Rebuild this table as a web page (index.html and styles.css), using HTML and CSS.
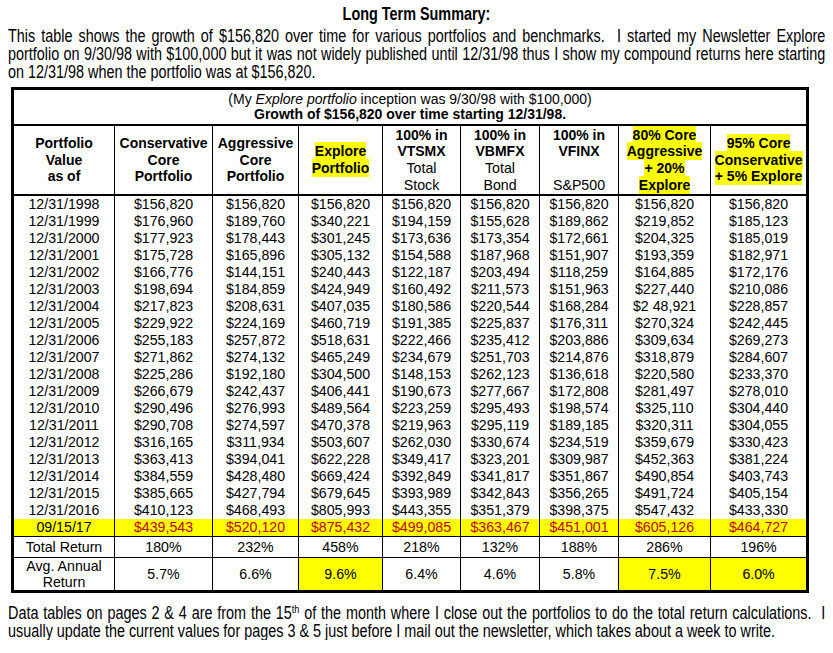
FILE: index.html
```html
<!DOCTYPE html>
<html>
<head>
<meta charset="utf-8">
<link rel="stylesheet" href="styles.css">
</head>
<body>
<h1 class="title">Long Term Summary:</h1>
<div class="narrow intro-wrap">
<p class="narrow-text">This table shows the growth of $156,820 over time for various portfolios and benchmarks.&nbsp; I started my Newsletter Explore portfolio on 9/30/98 with $100,000 but it was not widely published until 12/31/98 thus I show my compound returns here starting on 12/31/98 when the portfolio was at $156,820.</p>
</div>
<table class="summary">
<colgroup>
<col class="c1"><col class="c2"><col class="c3"><col class="c4"><col class="c5"><col class="c6"><col class="c7"><col class="c8"><col class="c9">
</colgroup>
<thead>
<tr class="caption-row"><th colspan="9">(My <i>Explore portfolio</i> inception was 9/30/98 with $100,000)<br><b>Growth of $156,820 over time starting 12/31/98.</b></th></tr>
<tr class="head-row">
<th>Portfolio<br>Value<br>as of</th>
<th>Conservative<br>Core<br>Portfolio</th>
<th>Aggressive<br>Core<br>Portfolio</th>
<th><span class="hl">Explore</span><br><span class="hl">Portfolio</span></th>
<th>100% in<br>VTSMX<br><span class="sub">Total<br>Stock</span></th>
<th>100% in<br>VBMFX<br><span class="sub">Total<br>Bond</span></th>
<th>100% in<br>VFINX<br><br><span class="sub">S&amp;P500</span></th>
<th><span class="hl">80% Core</span><br><span class="hl">Aggressive</span><br><span class="hl">+ 20%</span><br><span class="hl">Explore</span></th>
<th><span class="hl">95% Core</span><br><span class="hl">Conservative</span><br><span class="hl">+ 5% Explore</span></th>
</tr>
</thead>
<tbody>
<tr><td>12/31/1998</td><td>$156,820</td><td>$156,820</td><td>$156,820</td><td>$156,820</td><td>$156,820</td><td>$156,820</td><td>$156,820</td><td>$156,820</td></tr>
<tr><td>12/31/1999</td><td>$176,960</td><td>$189,760</td><td>$340,221</td><td>$194,159</td><td>$155,628</td><td>$189,862</td><td>$219,852</td><td>$185,123</td></tr>
<tr><td>12/31/2000</td><td>$177,923</td><td>$178,443</td><td>$301,245</td><td>$173,636</td><td>$173,354</td><td>$172,661</td><td>$204,325</td><td>$185,019</td></tr>
<tr><td>12/31/2001</td><td>$175,728</td><td>$165,896</td><td>$305,132</td><td>$154,588</td><td>$187,968</td><td>$151,907</td><td>$193,359</td><td>$182,971</td></tr>
<tr><td>12/31/2002</td><td>$166,776</td><td>$144,151</td><td>$240,443</td><td>$122,187</td><td>$203,494</td><td>$118,259</td><td>$164,885</td><td>$172,176</td></tr>
<tr><td>12/31/2003</td><td>$198,694</td><td>$184,859</td><td>$424,949</td><td>$160,492</td><td>$211,573</td><td>$151,963</td><td>$227,440</td><td>$210,086</td></tr>
<tr><td>12/31/2004</td><td>$217,823</td><td>$208,631</td><td>$407,035</td><td>$180,586</td><td>$220,544</td><td>$168,284</td><td>$2 48,921</td><td>$228,857</td></tr>
<tr><td>12/31/2005</td><td>$229,922</td><td>$224,169</td><td>$460,719</td><td>$191,385</td><td>$225,837</td><td>$176,311</td><td>$270,324</td><td>$242,445</td></tr>
<tr><td>12/31/2006</td><td>$255,183</td><td>$257,872</td><td>$518,631</td><td>$222,466</td><td>$235,412</td><td>$203,886</td><td>$309,634</td><td>$269,273</td></tr>
<tr><td>12/31/2007</td><td>$271,862</td><td>$274,132</td><td>$465,249</td><td>$234,679</td><td>$251,703</td><td>$214,876</td><td>$318,879</td><td>$284,607</td></tr>
<tr><td>12/31/2008</td><td>$225,286</td><td>$192,180</td><td>$304,500</td><td>$148,153</td><td>$262,123</td><td>$136,618</td><td>$220,580</td><td>$233,370</td></tr>
<tr><td>12/31/2009</td><td>$266,679</td><td>$242,437</td><td>$406,441</td><td>$190,673</td><td>$277,667</td><td>$172,808</td><td>$281,497</td><td>$278,010</td></tr>
<tr><td>12/31/2010</td><td>$290,496</td><td>$276,993</td><td>$489,564</td><td>$223,259</td><td>$295,493</td><td>$198,574</td><td>$325,110</td><td>$304,440</td></tr>
<tr><td>12/31/2011</td><td>$290,708</td><td>$274,597</td><td>$470,378</td><td>$219,963</td><td>$295,119</td><td>$189,185</td><td>$320,311</td><td>$304,055</td></tr>
<tr><td>12/31/2012</td><td>$316,165</td><td>$311,934</td><td>$503,607</td><td>$262,030</td><td>$330,674</td><td>$234,519</td><td>$359,679</td><td>$330,423</td></tr>
<tr><td>12/31/2013</td><td>$363,413</td><td>$394,041</td><td>$622,228</td><td>$349,417</td><td>$323,201</td><td>$309,987</td><td>$452,363</td><td>$381,224</td></tr>
<tr><td>12/31/2014</td><td>$384,559</td><td>$428,480</td><td>$669,424</td><td>$392,849</td><td>$341,817</td><td>$351,867</td><td>$490,854</td><td>$403,743</td></tr>
<tr><td>12/31/2015</td><td>$385,665</td><td>$427,794</td><td>$679,645</td><td>$393,989</td><td>$342,843</td><td>$356,265</td><td>$491,724</td><td>$405,154</td></tr>
<tr><td>12/31/2016</td><td>$410,123</td><td>$468,493</td><td>$805,993</td><td>$443,355</td><td>$351,379</td><td>$398,375</td><td>$547,432</td><td>$433,330</td></tr>
<tr class="current"><td class="date">09/15/17</td><td>$439,543</td><td>$520,120</td><td>$875,432</td><td>$499,085</td><td>$363,467</td><td>$451,001</td><td>$605,126</td><td>$464,727</td></tr>
<tr class="total"><td>Total Return</td><td>180%</td><td>232%</td><td>458%</td><td>218%</td><td>132%</td><td>188%</td><td>286%</td><td>196%</td></tr>
<tr class="annual"><td>Avg. Annual<br>Return</td><td>5.7%</td><td>6.6%</td><td class="yellow">9.6%</td><td>6.4%</td><td>4.6%</td><td>5.8%</td><td class="yellow">7.5%</td><td class="yellow">6.0%</td></tr>
</tbody>
</table>
<div class="narrow note-wrap">
<p class="narrow-text">Data tables on pages 2 &amp; 4 are from the 15<sup>th</sup> of the month where I close out the portfolios to do the total return calculations.&nbsp; I usually update the current values for pages 3 &amp; 5 just before I mail out the newsletter, which takes about a week to write.</p>
</div>
</body>
</html>
```

FILE: styles.css
```css
body {
  margin: 5px 8px 8px 8px;
  background: #ffffff;
  color: #000000;
  font-family: "Liberation Sans", Arial, sans-serif;
}

.title {
  margin: 0;
  text-align: center;
  font-size: 17.5px;
  line-height: 18px;
  font-weight: bold;
  transform: scaleX(0.823);
  transform-origin: 50% 0;
}

.narrow {
  overflow: hidden;
  width: 817px;
}

.intro-wrap {
  margin-top: 4px;
}

.note-wrap {
  margin-top: 11px;
}

.narrow-text {
  margin: 0;
  width: 993px;
  font-size: 17.5px;
  line-height: 18px;
  text-align: justify;
  transform: scaleX(0.823);
  transform-origin: 0 0;
}

.narrow-text sup {
  font-size: 11px;
  line-height: 11px;
  vertical-align: top;
}

.summary {
  margin: 6px 0 0 3px;
  width: 798px;
  table-layout: fixed;
  border-collapse: collapse;
  border: 3px solid #000;
}

.c1 { width: 102px; }
.c2 { width: 98px; }
.c3 { width: 86px; }
.c4 { width: 84px; }
.c5 { width: 78px; }
.c6 { width: 79px; }
.c7 { width: 79px; }
.c8 { width: 92px; }
.c9 { width: 97px; }

.caption-row th {
  font-weight: normal;
  font-size: 14px;
  line-height: 15px;
  height: 34px;
  padding: 0;
  text-align: center;
  border-bottom: 2px solid #000;
}

.caption-row b { font-weight: bold; }

.head-row th {
  font-size: 14px;
  line-height: 16.7px;
  font-weight: bold;
  padding: 0;
  height: 68px;
  text-align: center;
  vertical-align: middle;
  border-left: 1px solid #000;
  border-bottom: 2px solid #000;
}

.head-row th:first-child { border-left: none; }

.sub {
  font-weight: normal;
  font-size: 14.2px;
}

.hl {
  background: #ffff00;
  padding: 1px 0;
}

td {
  font-size: 14.2px;
  line-height: 17px;
  height: 17px;
  padding: 0;
  text-align: center;
  border-left: 1px solid #000;
  white-space: nowrap;
}

td:first-child { border-left: none; }

.current td {
  background: #ffff00;
  color: #c00000;
  border-bottom: 1px solid #000;
}

.current td.date { color: #000; }

.total td {
  height: 20px;
  line-height: 20px;
  border-bottom: 1px solid #000;
}

.annual td {
  height: 32px;
  line-height: 16px;
}

.annual td.yellow { background: #ffff00; }
```
